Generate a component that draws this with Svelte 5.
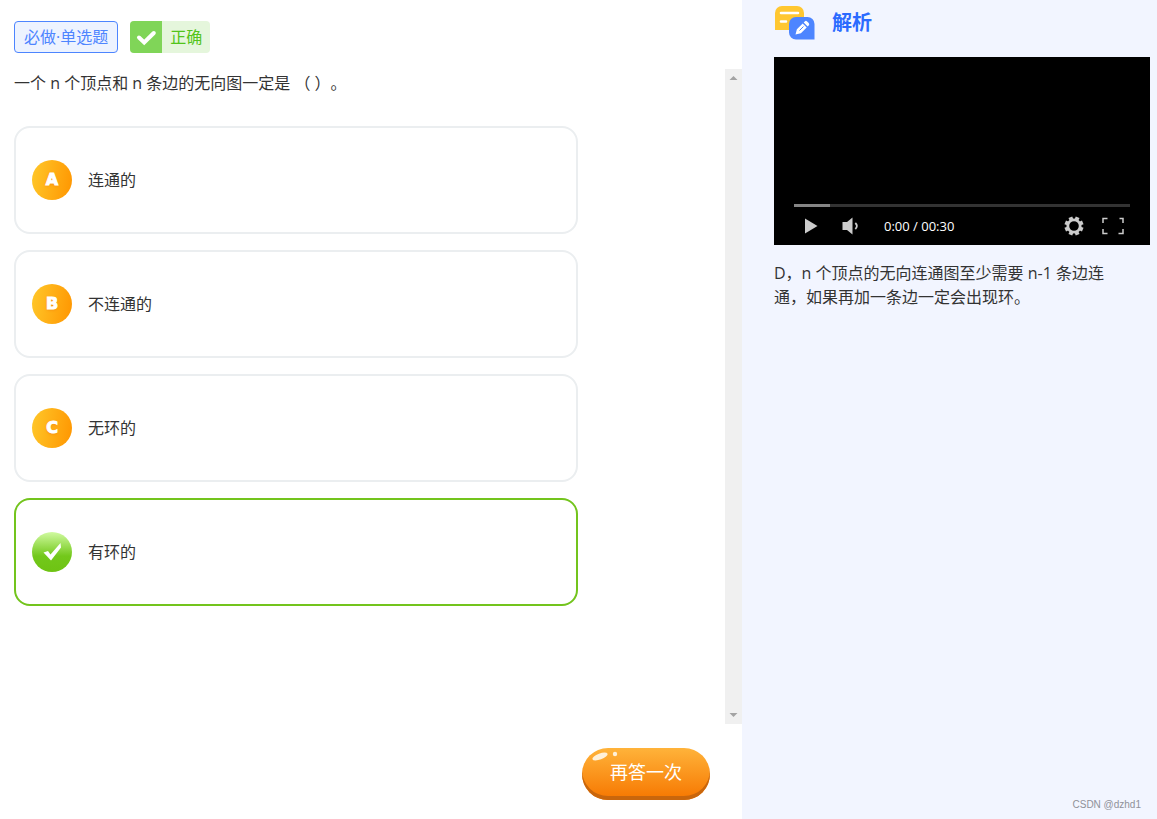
<script>
  const options = [
    { key: 'A', text: '连通的' },
    { key: 'B', text: '不连通的' },
    { key: 'C', text: '无环的' },
    { key: 'D', text: '有环的' }
  ];
  let selected = $state('D');
</script>

<div class="page">
  <main class="question">
    <header class="tags">
      <span class="kind">必做·单选题</span>
      <span class="result">
        <span class="result-icon">
          <svg width="32" height="32" viewBox="0 0 32 32" aria-hidden="true">
            <path d="M9 16.500l5.200 5L23.800 12" fill="none" stroke="#fff" stroke-width="4" stroke-linecap="round" stroke-linejoin="miter" />
          </svg>
        </span>
        <span class="result-text">正确</span>
      </span>
    </header>

    <div class="body">
      <div class="content">
        <p class="stem" id="stem">一个 n 个顶点和 n 条边的无向图一定是 （ ）。</p>
        <div class="options" role="radiogroup" aria-labelledby="stem">
          {#each options as option (option.key)}
            <label class="option" class:right={selected === option.key}>
              <input type="radio" name="answer" value={option.key} bind:group={selected} />
              {#if selected === option.key}
                <svg class="badge" viewBox="0 0 40 40" aria-hidden="true">
                  <defs>
                    <linearGradient id="green" x1="0" y1="0" x2="0" y2="1">
                      <stop offset="0" stop-color="#d0faa0" />
                      <stop offset="0.6" stop-color="#73c81b" />
                      <stop offset="1" stop-color="#6ec313" />
                    </linearGradient>
                  </defs>
                  <circle cx="20" cy="20" r="20" fill="url(#green)" />
                  <path d="M11.500 20.500l4.500-1.500 2.500 3.500L28.500 11l.5 4.500L19 28.500z" fill="#fff" />
                </svg>
              {:else}
                <span class="badge letter">{option.key}</span>
              {/if}
              <span>{option.text}</span>
            </label>
          {/each}
        </div>
      </div>
      <div class="rail" aria-hidden="true">
        <svg width="17" height="17" viewBox="0 0 17 17"><path d="M4.500 11h8l-4-4z" fill="#a3a3a3" /></svg>
        <svg width="17" height="17" viewBox="0 0 17 17"><path d="M4.500 6h8l-4 4z" fill="#a3a3a3" /></svg>
      </div>
    </div>

    <footer class="actions">
      <button class="again" type="button">
        <svg class="shine" width="40" height="14" viewBox="0 0 40 14" aria-hidden="true">
          <ellipse cx="18" cy="8.500" rx="8" ry="3" transform="rotate(-20 18 8.500)" fill="#fff0d8" />
          <circle cx="33" cy="6" r="2.200" fill="#fff0d8" />
        </svg>
        再答一次
      </button>
    </footer>
  </main>

  <aside class="analysis">
    <h2>
      <svg width="42" height="36" viewBox="0 0 42 36" aria-hidden="true">
        <path d="M1 25V8a7 7 0 0 1 7-7h15a7 7 0 0 1 7 7v17z" fill="#ffc731" />
        <path d="M7 8h17M7 16.500h5" stroke="#fff" stroke-width="2.600" stroke-linecap="round" />
        <path d="M15 19a7 7 0 0 1 7-7h11.500a7 7 0 0 1 7 7v15.500H22a7 7 0 0 1-7-7z" fill="#4d85ff" />
        <path d="M21.500 29.500l1.400-5.300 5.800-5.800 4 4-5.800 5.800zM29.700 17.400l1-1a1.700 1.700 0 0 1 2.400 0l1.600 1.600a1.700 1.700 0 0 1 0 2.400l-1 1z" fill="#fff" />
        <path d="M25.500 25.500l4-4" stroke="#4d85ff" stroke-width="1" />
      </svg>
      解析
    </h2>

    <section class="player" aria-label="解析">
      <div class="track"><div class="loaded"></div></div>
      <div class="controls">
        <button type="button" aria-label="播放">
          <svg width="24" height="24" viewBox="0 0 24 24"><path d="M6 4.500v15L18.500 12z" fill="#ccc" /></svg>
        </button>
        <button type="button" aria-label="音量">
          <svg width="24" height="24" viewBox="0 0 24 24">
            <path d="M4.500 8h4.500l5.500-4.500v17L9 16H4.500z" fill="#ccc" />
            <path d="M17.300 9q3.200 3 0 6" fill="none" stroke="#ccc" stroke-width="1.800" />
          </svg>
        </button>
        <span class="time">0:00 / 00:30</span>
        <button type="button" aria-label="设置">
          <svg width="24" height="24" viewBox="0 0 24 24">
            <circle cx="12" cy="12" r="6.200" fill="none" stroke="#ccc" stroke-width="2.800" />
            <g stroke="#ccc" stroke-width="4">
              {#each [22.5, 67.5, 112.5, 157.5, 202.5, 247.5, 292.5, 337.5] as angle}
                <path d="M12 2.500v3" transform="rotate({angle} 12 12)" />
              {/each}
            </g>
          </svg>
        </button>
        <button type="button" aria-label="全屏">
          <svg width="24" height="24" viewBox="0 0 24 24">
            <path d="M2 9V4.500h4.500M18.500 4.500H22V9M22 15v4.500h-4.500M6.500 19.500H2V15" fill="none" stroke="#ccc" stroke-width="1.500" />
          </svg>
        </button>
      </div>
    </section>

    <p class="explain">D，n 个顶点的无向连通图至少需要 n-1 条边连通，如果再加一条边一定会出现环。</p>
    <small class="credit">CSDN @dzhd1</small>
  </aside>
</div>

<style>
  :global(body) {
    margin: 0;
  }

  .page {
    display: grid;
    grid-template-columns: minmax(0, 1fr) 415px;
    min-height: 100vh;
    background: #fff;
    color: #333;
    font: 400 16px/24px "Open Sans", "Noto Sans CJK SC", sans-serif;
    text-spacing-trim: space-all;
  }

  .page :is(p, h2) {
    margin: 0;
  }

  .question {
    display: flex;
    flex-direction: column;
    box-sizing: border-box;
    padding: 21px 0 19px 14px;
  }

  .tags {
    display: flex;
    gap: 12px;
    margin-bottom: 16px;
    font-weight: 300;
  }

  .kind {
    box-sizing: border-box;
    height: 32px;
    padding: 0 9px;
    border: 1px solid #4d85ff;
    border-radius: 4px;
    background: #edf3ff;
    color: #4d85ff;
    font-weight: 400;
    line-height: 30px;
  }

  .result {
    display: flex;
    height: 32px;
    overflow: hidden;
    border-radius: 4px;
    background: #e5f6dc;
    color: #52c41a;
    font-weight: 400;
    line-height: 32px;
  }

  .result-icon {
    width: 32px;
    background: #80d558;
  }

  .result-text {
    padding: 0 8px;
  }

  svg {
    display: block;
    flex: none;
  }

  .body {
    display: flex;
    flex: 1;
  }

  .content {
    flex: 1;
    padding-top: 2px;
  }

  .options {
    display: flex;
    flex-direction: column;
    gap: 16px;
    max-width: 564px;
    margin-top: 31px;
  }

  .option {
    display: flex;
    align-items: center;
    gap: 16px;
    box-sizing: border-box;
    min-height: 108px;
    padding: 16px;
    border: 2px solid #ebeef0;
    border-radius: 16px;
    cursor: pointer;
  }

  .option.right {
    border-color: #73c41d;
  }

  .option input {
    position: absolute;
    opacity: 0;
  }

  .badge {
    width: 40px;
    height: 40px;
    flex: none;
  }

  .letter {
    border-radius: 50%;
    background: linear-gradient(100deg, #ffc82a, #ff9500);
    color: #fff;
    font: 700 16px/40px "DejaVu Sans", sans-serif;
    text-align: center;
    text-shadow: 0 1px 3px #f58a10;
    -webkit-text-stroke: 1px #fff;
  }

  .rail {
    display: flex;
    flex-direction: column;
    justify-content: space-between;
    width: 17px;
    background: #f0f0f0;
  }

  .actions {
    display: flex;
    justify-content: flex-end;
    padding: 24px 32px 0 0;
  }

  .again {
    position: relative;
    width: 128px;
    height: 52px;
    padding: 0 0 4px;
    border: 0;
    border-radius: 26px;
    background: linear-gradient(#ffb33a, #f77b04 48px);
    box-shadow: inset 0 -4px 0 #c9660c;
    color: #fff;
    font: inherit;
    font-size: 18px;
    cursor: pointer;
  }

  .shine {
    position: absolute;
    top: 0;
    left: 0;
  }

  .analysis {
    display: flex;
    flex-direction: column;
    box-sizing: border-box;
    padding: 5px 7px 5px 32px;
    background: #f2f5ff;
  }

  h2 {
    display: flex;
    align-items: center;
    gap: 16px;
    height: 36px;
    color: #2b6bff;
    font-size: 20px;
    font-weight: 700;
  }

  .player {
    display: flex;
    flex-direction: column;
    justify-content: flex-end;
    box-sizing: border-box;
    aspect-ratio: 2;
    margin: 16px 0;
    padding: 0 20px 7px;
    background: #000;
  }

  .track {
    height: 3px;
    background: #333;
  }

  .loaded {
    width: 36px;
    height: 3px;
    background: #858585;
  }

  .controls {
    display: flex;
    align-items: center;
    gap: 15px;
    padding: 7px 5px 0 5px;
  }

  .controls button {
    padding: 0;
    border: 0;
    background: none;
    cursor: pointer;
  }

  .time {
    flex: 1;
    padding-left: 7px;
    color: #fff;
    font: 500 13px/24px "Open Sans", sans-serif;
  }

  .explain {
    padding-right: 20px;
  }

  .credit {
    margin-top: auto;
    padding-right: 9px;
    color: #8f9199;
    font: 400 10px/18px "Liberation Sans", sans-serif;
    text-align: right;
  }
</style>
